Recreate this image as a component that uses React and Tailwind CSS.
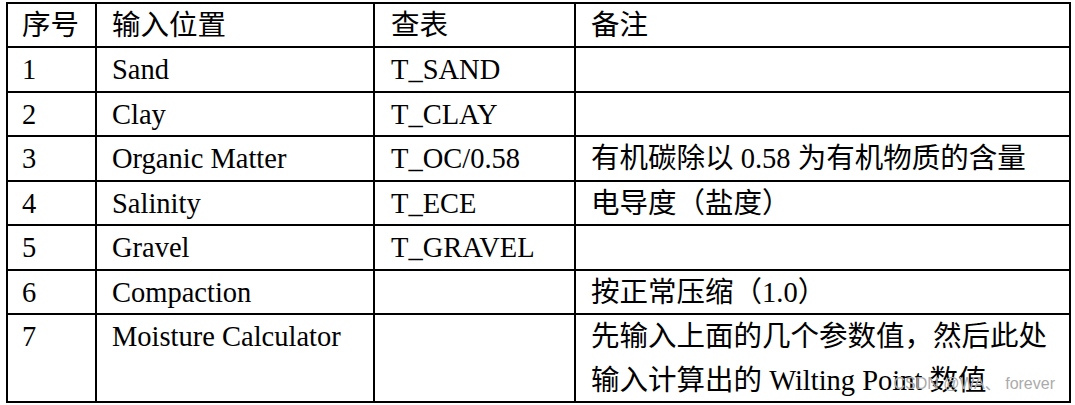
const L = ({ children }) => <span className="font-['Liberation_Serif',serif]">{children}</span>

const rows = [
  { no: "序号", name: "输入位置", table: "查表", note: "备注", h: "h-[44px]" },
  { no: "1", name: "Sand", table: "T_SAND", note: "", h: "h-[45px]" },
  { no: "2", name: "Clay", table: "T_CLAY", note: "", h: "h-[44px]" },
  {
    no: "3",
    name: "Organic Matter",
    table: "T_OC/0.58",
    note: (
      <>
        有机碳除以<L> 0.58 </L>为有机物质的含量
      </>
    ),
    h: "h-[45px]",
  },
  { no: "4", name: "Salinity", table: "T_ECE", note: "电导度（盐度）", h: "h-[44px]" },
  { no: "5", name: "Gravel", table: "T_GRAVEL", note: "", h: "h-[45px]" },
  {
    no: "6",
    name: "Compaction",
    table: "",
    note: (
      <>
        按正常压缩（<L>1.0</L>）
      </>
    ),
    h: "h-[44px]",
  },
  {
    no: "7",
    name: "Moisture Calculator",
    table: "",
    note: (
      <>
        先输入上面的几个参数值，然后此处
        <br />
        输入计算出的<L> Wilting Point </L>数值
      </>
    ),
    h: "h-[88px]",
    last: true,
  },
]

const cell = "border-r-2 border-b-2 border-black leading-[44px] whitespace-nowrap"

export default function App() {
  return (
    <div
      className="w-[1075px] h-[405px] bg-white text-black pl-[6px] pt-[2px] overflow-hidden"
      style={{ fontFamily: '"Liberation Serif", "Noto Sans CJK SC", serif' }}
    >
      <div className="grid grid-cols-[89px_278px_201px_495px] border-l-2 border-t-2 border-black w-fit text-[28.5px]">
        {rows.map((r, i) => (
          <div key={i} className="contents">
            <div className={`${cell} ${r.h} pl-[14px]`}>{r.no}</div>
            <div className={`${cell} ${r.h} pl-[15px]`}>{r.name}</div>
            <div className={`${cell} ${r.h} pl-[16px]`}>{r.table}</div>
            <div className={`${cell} ${r.h} pl-[15px] relative`}>
              {r.note}
              {r.last && (
                <span
                  className="absolute right-[14px] bottom-[9px] text-[16px] leading-none text-[#ababab] whitespace-nowrap"
                  style={{ fontFamily: '"Liberation Sans", "Noto Sans CJK SC", sans-serif' }}
                >
                  CSDN @WA、 forever
                </span>
              )}
            </div>
          </div>
        ))}
      </div>
    </div>
  )
}
